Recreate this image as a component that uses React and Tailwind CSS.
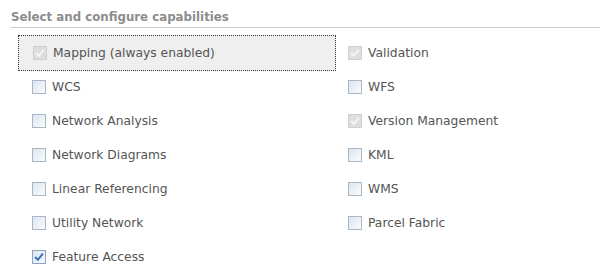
import React from 'react';

const left = [
  { label: 'Mapping (always enabled)', state: 'locked', focus: true },
  { label: 'WCS', state: 'off' },
  { label: 'Network Analysis', state: 'off' },
  { label: 'Network Diagrams', state: 'off' },
  { label: 'Linear Referencing', state: 'off' },
  { label: 'Utility Network', state: 'off' },
  { label: 'Feature Access', state: 'on' },
];

const right = [
  { label: 'Validation', state: 'locked' },
  { label: 'WFS', state: 'off' },
  { label: 'Version Management', state: 'locked' },
  { label: 'KML', state: 'off' },
  { label: 'WMS', state: 'off' },
  { label: 'Parcel Fabric', state: 'off' },
];

const Box = ({ state }) => {
  if (state === 'locked') {
    return (
      <span className="w-[14px] h-[14px] border border-[#cfcfcf] bg-[#dedede] flex items-center justify-center shrink-0">
        <svg width="10" height="10" viewBox="0 0 9 9">
          <path d="M1 4.5 L3.5 7 L8 1.5" fill="none" stroke="#f4f4f4" strokeWidth="1.8" />
        </svg>
      </span>
    );
  }
  if (state === 'on') {
    return (
      <span className="w-[14px] h-[14px] border border-[#8ea4c1] bg-gradient-to-br from-[#dbe6f2] to-[#f5f8fc] flex items-center justify-center shrink-0">
        <svg width="10" height="10" viewBox="0 0 9 9">
          <path d="M1 4.5 L3.5 7 L8 1.5" fill="none" stroke="#3a73b8" strokeWidth="1.8" />
        </svg>
      </span>
    );
  }
  return <span className="w-[14px] h-[14px] border border-[#a9b6c6] bg-gradient-to-br from-[#dce5ee] to-[#fbfcfd] shrink-0" />;
};

const Item = ({ item, first }) => (
  <div
    className={`flex items-center gap-[6px] ${first ? 'pl-[14px]' : 'pl-[12px]'} ${
      item.focus ? 'border border-dotted border-[#333] bg-[#efefef] -my-px' : ''
    }`}
  >
    <Box state={item.state} />
    <span className="text-[12.3px] text-[#555]">{item.label}</span>
  </div>
);

const App = () => {
  return (
    <div className="w-[600px] h-[276px] bg-white overflow-hidden" style={{ fontFamily: '"DejaVu Sans", Verdana, sans-serif' }}>
      <div className="ml-[10px] pt-[9px] pb-[2px] pl-px border-b border-[#cccccc]">
        <h2 className="text-[11.8px] font-bold text-[#8c8c8c] leading-[16px]">Select and configure capabilities</h2>
      </div>
      <div className="grid grid-cols-[318px_1fr] auto-rows-[34px] ml-[18px] mt-[8px]">
        {left.map((item, i) => (
          <React.Fragment key={item.label}>
            <Item item={item} first />
            {right[i] ? <Item item={right[i]} /> : <div />}
          </React.Fragment>
        ))}
      </div>
    </div>
  );
};

export default App;
